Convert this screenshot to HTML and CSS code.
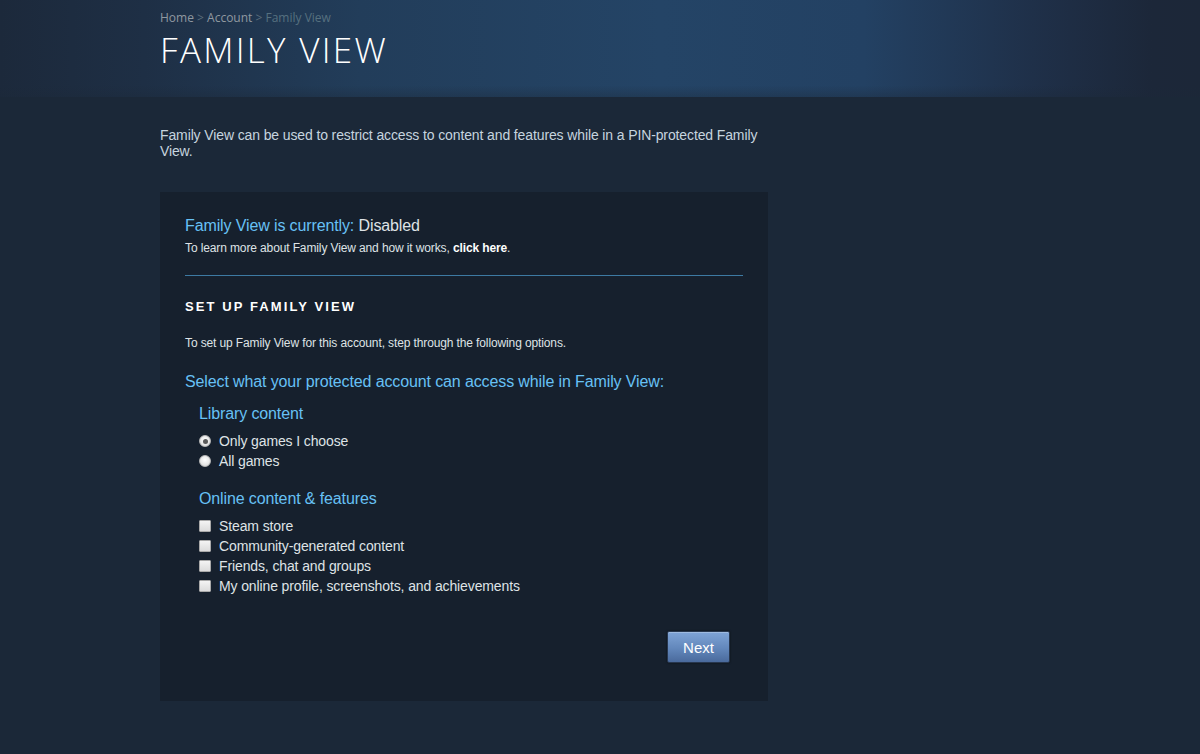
FILE: index.html
```html
<!DOCTYPE html>
<html lang="en">
<head>
<meta charset="utf-8">
<title>Family View</title>
<link rel="stylesheet" href="styles.css">
</head>
<body>
<header class="page-header">
  <div class="header-inner">
    <div class="breadcrumbs"><a class="crumb" href="#">Home</a> <span class="sep">&gt;</span> <a class="crumb" href="#">Account</a> <span class="sep">&gt;</span> <span class="crumb-current">Family View</span></div>
    <h1 class="page-title">FAMILY VIEW</h1>
  </div>
</header>
<main class="content">
  <p class="intro">Family View can be used to restrict access to content and features while in a PIN-protected Family View.</p>
  <section class="panel">
    <div class="status">Family View is currently: <span class="status-value">Disabled</span></div>
    <div class="learn">To learn more about Family View and how it works, <a class="learn-link" href="#">click here</a>.</div>
    <div class="divider"></div>
    <h2 class="setup-title">SET UP FAMILY VIEW</h2>
    <p class="setup-desc">To set up Family View for this account, step through the following options.</p>
    <div class="select-title">Select what your protected account can access while in Family View:</div>
    <div class="group">
      <div class="group-title">Library content</div>
      <div class="options">
        <label class="option"><span class="radio checked"></span>Only games I choose</label>
        <label class="option"><span class="radio"></span>All games</label>
      </div>
      <div class="group-title group-title-second">Online content &amp; features</div>
      <div class="options">
        <label class="option"><span class="checkbox"></span>Steam store</label>
        <label class="option"><span class="checkbox"></span>Community-generated content</label>
        <label class="option"><span class="checkbox"></span>Friends, chat and groups</label>
        <label class="option"><span class="checkbox"></span>My online profile, screenshots, and achievements</label>
      </div>
    </div>
    <div class="actions"><button class="btn-next" type="button">Next</button></div>
  </section>
</main>
</body>
</html>
```

FILE: styles.css
```css
html, body {
  margin: 0;
  padding: 0;
}
body {
  background: #1b2838;
  font-family: Arial, "Liberation Sans", sans-serif;
  letter-spacing: -0.12px;
  color: #c6d4df;
  min-height: 754px;
}
.page-header {
  height: 97px;
  background:
    linear-gradient(to bottom, rgba(0,0,0,0) 88%, rgba(27,40,56,0.35) 100%),
    linear-gradient(to right, #1c293b 0%, #1e2f45 12%, #223d5a 30%, #244466 55%, #234163 72%, #1f3049 86%, #1c2739 96%, #1c2738 100%);
}
.header-inner {
  width: 880px;
  margin: 0 0 0 160px;
  padding-top: 10px;
}
.breadcrumbs {
  font-family: "Open Sans", "Liberation Sans", sans-serif;
  font-size: 12px;
  line-height: 16px;
  letter-spacing: 0;
  color: #8f98a0;
}
.crumb {
  color: #8f98a0;
  text-decoration: none;
}
.sep {
  color: #5b6d7b;
}
.crumb-current {
  color: #56707f;
}
.page-title {
  margin: 4px 0 0 0;
  font-family: "Open Sans", "Liberation Sans", sans-serif;
  font-weight: 300;
  font-size: 35px;
  line-height: 40px;
  letter-spacing: 2.3px;
  color: #ffffff;
}
.content {
  width: 608px;
  margin: 0 0 0 160px;
  padding-top: 30px;
}
.intro {
  margin: 0;
  font-size: 14px;
  line-height: 16px;
  color: #c6d4df;
}
.panel {
  margin-top: 33px;
  background: #16202d;
  padding: 24px 25px 38px 25px;
}
.status {
  font-size: 16px;
  line-height: 20px;
  color: #67c1f5;
}
.status-value {
  color: #dfe3e6;
}
.learn {
  margin-top: 4px;
  font-size: 12px;
  line-height: 16px;
  color: #dfe3e6;
}
.learn-link {
  color: #ffffff;
  font-weight: bold;
  text-decoration: none;
}
.divider {
  margin-top: 19px;
  height: 1px;
  background: #3d7aa3;
}
.setup-title {
  margin: 22px 0 0 0;
  font-size: 13px;
  line-height: 18px;
  font-weight: bold;
  letter-spacing: 2.1px;
  color: #ffffff;
}
.setup-desc {
  margin: 19px 0 0 0;
  font-size: 12px;
  line-height: 16px;
  color: #dfe3e6;
}
.select-title {
  margin-top: 21px;
  font-size: 16px;
  line-height: 20px;
  color: #67c1f5;
}
.group {
  padding-left: 14px;
}
.group-title {
  margin-top: 12px;
  font-size: 16px;
  line-height: 20px;
  color: #67c1f5;
}
.group-title-second {
  margin-top: 18px;
}
.options {
  margin-top: 7px;
  display: flex;
  flex-direction: column;
}
.option {
  display: flex;
  align-items: center;
  gap: 8px;
  font-size: 14px;
  line-height: 20px;
  color: #dfe3e6;
}
.radio {
  width: 12px;
  height: 12px;
  border-radius: 50%;
  box-sizing: border-box;
  border: 1px solid #b9b9b9;
  background: radial-gradient(circle at 50% 40%, #ffffff 0%, #e6e6e6 60%, #cfcfcf 100%);
  position: relative;
  flex: none;
}
.radio.checked::after {
  content: "";
  position: absolute;
  left: 2.5px;
  top: 2.5px;
  width: 5px;
  height: 5px;
  border-radius: 50%;
  background: #5a5a5a;
}
.checkbox {
  width: 12px;
  height: 12px;
  box-sizing: border-box;
  border: 1px solid #a9a9a9;
  border-radius: 1px;
  background: linear-gradient(to bottom, #f4f4f4, #dcdcdc);
  flex: none;
}
.actions {
  margin-top: 35px;
  display: flex;
  justify-content: flex-end;
  padding-right: 13px;
}
.btn-next {
  width: 63px;
  height: 32px;
  padding: 0;
  border: 1px solid #27364d;
  border-radius: 2px;
  background: linear-gradient(to bottom, #7fa4d6 0%, #6287bb 55%, #4a6a9c 100%);
  box-shadow: inset 0 1px 0 rgba(255,255,255,0.25), 0 0 2px rgba(0,0,0,0.6);
  color: #ffffff;
  font-family: Arial, "Liberation Sans", sans-serif;
  font-size: 15px;
  cursor: pointer;
}
```
